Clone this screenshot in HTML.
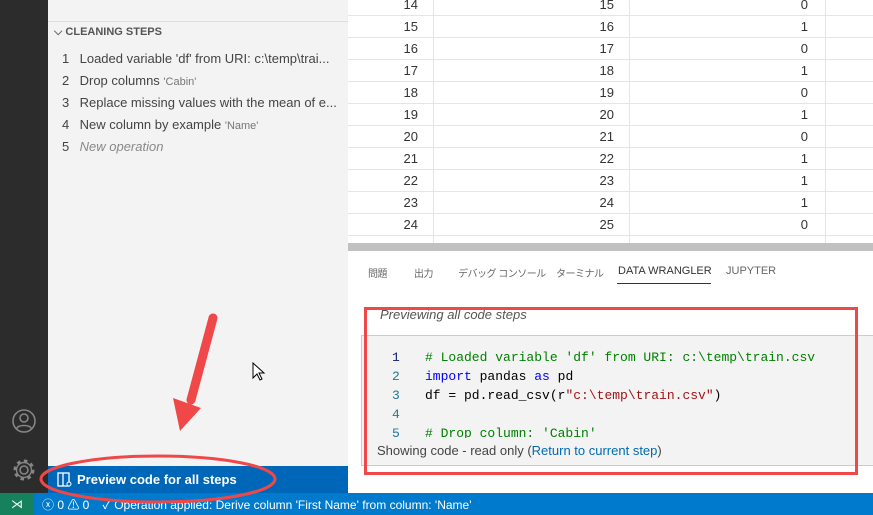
<!DOCTYPE html>
<html><head><meta charset="utf-8"><style>
*{margin:0;padding:0;box-sizing:border-box}
body{width:873px;height:515px;overflow:hidden;position:relative;background:#fff;font-family:"Segoe UI","Liberation Sans","Noto Sans CJK JP",sans-serif;font-size:13px;color:#424242}
.abs{position:absolute}
#act{left:0;top:0;width:48px;height:493px;background:#2c2c2c}
#side{left:48px;top:0;width:300px;height:466px;background:#f3f3f3}
.step{position:absolute;left:14px;font-size:13px;color:#444;white-space:nowrap}
.step b{font-weight:normal;display:inline-block;width:14px}
.tag{font-size:11px;color:#777}
.row{position:absolute;left:348px;width:525px;height:22px;border-bottom:1px solid #e5e5e5}
.row span{position:absolute;top:3px;font-size:13px;color:#333;text-align:right;width:40px}
.tab{position:absolute;top:265px;font-size:11px;color:#666;white-space:nowrap}
.jp{font-size:10px;letter-spacing:-0.5px}
.code{font-family:"Liberation Mono",monospace;font-size:13px;position:absolute;white-space:pre;line-height:19px}
</style></head><body>
<div class="abs" id="act"></div>
<svg class="abs" style="left:11px;top:408px" width="26" height="26" viewBox="0 0 26 26"><circle cx="13" cy="13" r="11" fill="none" stroke="#858585" stroke-width="1.6"/><circle cx="13" cy="10" r="4" fill="none" stroke="#858585" stroke-width="1.6"/><path d="M5.5 20.5c2-4 13-4 15 0" fill="none" stroke="#858585" stroke-width="1.6"/></svg>
<svg class="abs" style="left:11px;top:457px" width="26" height="26" viewBox="0 0 26 26"><circle cx="13" cy="13" r="4" fill="none" stroke="#858585" stroke-width="1.6"/><circle cx="13" cy="13" r="9" fill="none" stroke="#858585" stroke-width="3" stroke-dasharray="3.5 3.5"/><circle cx="13" cy="13" r="7.5" fill="none" stroke="#858585" stroke-width="1.4"/></svg>
<div class="abs" id="side">
<div class="abs" style="left:0;top:21px;width:300px;height:1px;background:#ddd"></div>
<div class="abs" style="left:6px;top:26px;font-size:11px;font-weight:bold;color:#555"><span style="color:#666">⌵</span> CLEANING STEPS</div>
<div class="step" style="top:51px"><b>1</b> Loaded variable 'df' from URI: c:\temp\trai...</div>
<div class="step" style="top:73px"><b>2</b> Drop columns <span class="tag">'Cabin'</span></div>
<div class="step" style="top:95px"><b>3</b> Replace missing values with the mean of e...</div>
<div class="step" style="top:117px"><b>4</b> New column by example <span class="tag">'Name'</span></div>
<div class="step" style="top:139px;color:#888;font-style:italic"><b style="color:#444;font-style:normal">5</b> New operation</div>
</div>
<svg class="abs" style="left:252px;top:362px" width="14" height="20" viewBox="0 0 14 20"><path d="M1 1v15l4-4 3 6 2-1-3-6h5z" fill="#fff" stroke="#000"/></svg>
<div class="abs" style="left:48px;top:466px;width:300px;height:27px;background:#0066b8"></div>
<svg class="abs" style="left:57px;top:472px" width="16" height="16" viewBox="0 0 16 16"><rect x="1" y="1" width="11" height="13" fill="none" stroke="#fff" stroke-width="1.3"/><line x1="6" y1="1" x2="6" y2="14" stroke="#fff" stroke-width="1.3"/><circle cx="12" cy="12" r="2" fill="#0066b8" stroke="#fff"/></svg>
<div class="abs" style="left:77px;top:472px;color:#fff;font-weight:bold;font-size:13px">Preview code for all steps</div>
<div id="tbl">
<script>
var h='';for(var i=0;i<11;i++){var y=-6+22*i;var v=[0,1,0,1,0,1,0,1,1,1,0][i];h+='<div class="row" style="top:'+y+'px"><span style="left:30px">'+(14+i)+'</span><span style="left:226px">'+(15+i)+'</span><span style="left:420px">'+v+'</span></div>';}
document.write(h);
</script>
</div>
<div class="abs" style="left:433px;top:0;width:1px;height:243px;background:#e5e5e5"></div>
<div class="abs" style="left:629px;top:0;width:1px;height:243px;background:#e5e5e5"></div>
<div class="abs" style="left:825px;top:0;width:1px;height:243px;background:#e5e5e5"></div>
<div class="abs" style="left:348px;top:243px;width:525px;height:8px;background:#c1c1c1"></div>
<div class="tab jp" style="left:368px">問題</div>
<div class="tab jp" style="left:414px">出力</div>
<div class="tab jp" style="left:458px">デバッグ コンソール</div>
<div class="tab jp" style="left:556px">ターミナル</div>
<div class="tab" style="left:618px;color:#333">DATA WRANGLER</div>
<div class="abs" style="left:617px;top:283px;width:94px;height:1px;background:#333"></div>
<div class="tab" style="left:726px">JUPYTER</div>
<div class="abs" style="left:380px;top:307px;font-style:italic;color:#555;font-size:13px">Previewing all code steps</div>
<div class="abs" style="left:361px;top:335px;width:520px;height:131px;background:#f3f3f3;border:1px solid #ccc"></div>
<div class="abs" style="left:361px;top:338px;width:500px;height:100px;overflow:hidden">
<div class="code" style="left:31px;top:10px;color:#237893"><span style="color:#0b216f">1</span>
2
3
4
5</div>
<div class="code" style="left:64px;top:10px;color:#000"><span style="color:#008000"># Loaded variable 'df' from URI: c:\temp\train.csv</span>
<span style="color:#0000ff">import</span> pandas <span style="color:#0000ff">as</span> pd
df = pd.read_csv(r<span style="color:#a31515">"c:\temp\train.csv"</span>)

<span style="color:#008000"># Drop column: 'Cabin'</span></div>
</div>
<div class="abs" style="left:377px;top:443px;font-size:13px;color:#444">Showing code - read only (<span style="color:#006ab1">Return to current step</span>)</div>
<div class="abs" style="left:364px;top:307px;width:494px;height:168px;border:3px solid #f04848"></div>
<div class="abs" style="left:0;top:493px;width:873px;height:22px;background:#007acc"></div>
<div class="abs" style="left:0;top:493px;width:34px;height:22px;background:#16825d;color:#fff;text-align:center;font-size:12px;line-height:22px">⋊</div>
<div class="abs" style="left:42px;top:496px;color:#fff;font-size:12px">ⓧ 0 ⚠ 0 &nbsp;&nbsp; ✓ Operation applied: Derive column 'First Name' from column: 'Name'</div>
<svg class="abs" style="left:0;top:0" width="873" height="515">
<ellipse cx="158" cy="479" rx="117" ry="23" fill="none" stroke="#f04848" stroke-width="3"/>
<line x1="213" y1="318" x2="191" y2="400" stroke="#f04848" stroke-width="9" stroke-linecap="round"/>
<polygon points="173,398 201,408 180,431" fill="#f04848"/>
</svg>
</body></html>
